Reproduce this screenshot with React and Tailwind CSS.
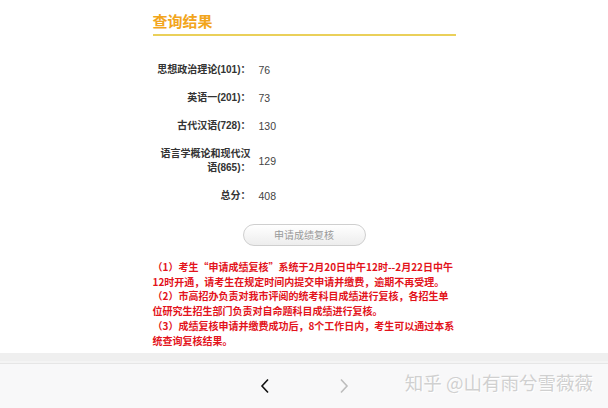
import React from "react";

const scores = [
  { label: "思想政治理论(101)：", value: "76" },
  { label: "英语一(201)：", value: "73" },
  { label: "古代汉语(728)：", value: "130" },
  { label: "语言学概论和现代汉语(865)：", value: "129" },
  { label: "总分：", value: "408" },
];

const notes = [
  "（1）考生“申请成绩复核”系统于2月20日中午12时--2月22日中午12时开通，请考生在规定时间内提交申请并缴费，逾期不再受理。",
  "（2）市高招办负责对我市评阅的统考科目成绩进行复核，各招生单位研究生招生部门负责对自命题科目成绩进行复核。",
  "（3）成绩复核申请并缴费成功后，8个工作日内，考生可以通过本系统查询复核结果。",
];

const App = () => {
  return (
    <div
      className="w-[608px] h-[408px] bg-white flex flex-col overflow-hidden"
      style={{ fontFamily: '"Liberation Sans", "Noto Sans CJK SC", sans-serif' }}
    >
      {/* Result panel */}
      <div className="flex-1 flex justify-center">
        <div className="w-[303px] flex flex-col pt-[11px]">
          <div
            className="text-[15px] leading-[20px] font-bold text-[#f2a51c] pb-[3px] border-b-2 border-[#ead05a]"
            style={{ fontFamily: '"Noto Sans CJK SC", sans-serif' }}
          >
            查询结果
          </div>

          {/* Scores */}
          <div className="mt-[20px] flex flex-col">
            {scores.map((row) => (
              <div key={row.label} className="flex items-center py-[7px]">
                <div className="w-[98px] text-right text-[10px] leading-[14px] font-bold text-[#333]">
                  {row.label}
                </div>
                <div className="ml-[8px] text-[10.5px] leading-[14px] text-[#444]">
                  {row.value}
                </div>
              </div>
            ))}
          </div>

          {/* Review button */}
          <div className="mt-[14px] flex justify-center">
            <button className="w-[123px] h-[22px] rounded-full border border-[#cfcfcf] bg-gradient-to-b from-white to-[#ededed] text-[10px] text-[#9a9a9a]">
              申请成绩复核
            </button>
          </div>

          {/* Notes */}
          <div
            className="mt-[14px] text-[10px] leading-[14.7px] font-bold text-[#e3131b]"
            style={{ fontFamily: '"Noto Sans CJK SC", sans-serif' }}
          >
            {notes.map((n) => (
              <p key={n}>{n}</p>
            ))}
          </div>
        </div>
      </div>

      {/* Bottom toolbar */}
      <div className="h-[8px] bg-[#efefef]" />
      <div className="h-[3px] bg-[#f4f4f4] border-b border-[#e6e6e6]" />
      <div className="relative h-[44px] bg-[#f8f8f9] flex items-center justify-center gap-[69px]">
        <svg width="10" height="16" viewBox="0 0 10 16">
          <path d="M8 1.5 L2 8 L8 14.5" fill="none" stroke="#111" strokeWidth="1.6" />
        </svg>
        <svg width="10" height="16" viewBox="0 0 10 16">
          <path d="M2 1.5 L8 8 L2 14.5" fill="none" stroke="#bdbdbd" strokeWidth="1.6" />
        </svg>
        <div
          className="absolute right-[15px] top-[6px] text-[18.5px] leading-[24px] text-[#d0d0d0]"
          style={{
            fontFamily: '"Noto Sans CJK SC", sans-serif',
            textShadow: "0 0 1px #fff, 1px 1px 0 #fff",
          }}
        >
          知乎 @山有雨兮雪薇薇
        </div>
      </div>
    </div>
  );
};

export default App;
